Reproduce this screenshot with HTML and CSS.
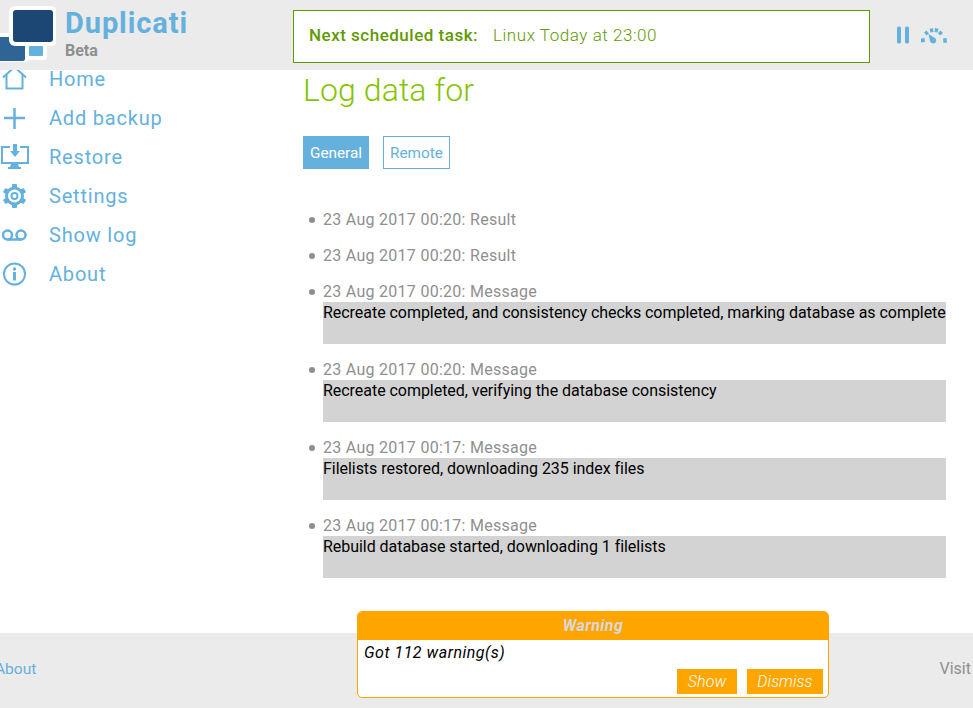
FILE: index.html
```html
<!DOCTYPE html>
<html lang="en">
<head>
<meta charset="utf-8">
<title>Duplicati</title>
<link rel="stylesheet" href="styles.css">
</head>
<body>
<div class="page">
  <header class="header">
    <div class="brand">
      <svg class="logo" width="56" height="64" viewBox="0 0 56 64">
        <rect x="-18" y="33" width="46" height="29" rx="3" fill="#fff"/>
        <rect x="-14" y="37" width="39" height="24" rx="2" fill="#2f6496"/>
        <rect x="26" y="44" width="21" height="16" rx="3" fill="#fff"/>
        <rect x="29" y="46" width="14" height="10" rx="1" fill="#64b1de"/>
        <rect x="9" y="6" width="48" height="40" rx="6" fill="#fff"/>
        <rect x="13" y="10" width="40" height="32" rx="3" fill="#1c4673"/>
      </svg>
      <div class="brand-text">
        <div class="brand-name">Duplicati</div>
        <div class="brand-beta">Beta</div>
      </div>
    </div>
    <div class="status">
      <span class="status-label">Next scheduled task:</span>
      <span class="status-value">Linux Today at 23:00</span>
    </div>
    <div class="controls">
      <svg width="14" height="18" viewBox="0 0 14 18"><rect x="1" y="0.500" width="4" height="17" rx="1.500" fill="#64b1de"/><rect x="9" y="0.500" width="4" height="17" rx="1.500" fill="#64b1de"/></svg>
      <svg class="gauge" width="26" height="17" viewBox="0 0 26 17" fill="#64b1de">
        <path d="M0 10.500l3.500-.5.500 4-4 .5z"/>
        <path d="M3 4.500l2.500-2 2.500 3-2.500 2z"/>
        <path d="M8.500 1l3.500-1 .5 4-3 .5z"/>
        <path d="M14 0l3.500.8-1 3.700-3-.5z"/>
        <path d="M19.500 2.500l2.500 2.500-2.800 2.500-2.300-2.300z"/>
        <path d="M22 10.500l3.500-.5.500 4.500-3.500.5z"/>
        <path d="M7.500 6l7 4.500c1.500 1.500.5 5-2 5-2 0-3-1-3.500-2.500z"/>
      </svg>
    </div>
  </header>
  <div class="body">
    <nav class="nav">
      <a class="nav-item"><svg class="nav-icon" width="30" height="26" viewBox="0 0 30 26" fill="none" stroke="#64b1de" stroke-width="2"><path d="M3 11.500L14.500 1 26 11.500"/><path d="M6.500 9v13.500h16V9"/></svg><span>Home</span></a>
      <a class="nav-item"><svg class="nav-icon" width="30" height="26" viewBox="0 0 30 26" fill="none" stroke="#64b1de" stroke-width="2.500"><path d="M4 13h21M14.500 3v21"/></svg><span>Add backup</span></a>
      <a class="nav-item"><svg class="nav-icon" width="30" height="26" viewBox="0 0 30 26"><path fill="#64b1de" d="M1 2h9v2H3v14h24V4h-7V2h9v18H18l1 3h2v2H8v-2h2l1-3H1z"/><path fill="#64b1de" d="M13 0h4v7h3l-5 6-5-6h3z"/></svg><span>Restore</span></a>
      <a class="nav-item"><svg class="nav-icon" width="30" height="26" viewBox="0 0 30 26"><g fill="#64b1de"><circle cx="14.500" cy="13" r="9.500"/><rect x="12" y="1" width="5" height="24" rx="1"/><rect x="12" y="1" width="5" height="24" rx="1" transform="rotate(60 14.500 13)"/><rect x="12" y="1" width="5" height="24" rx="1" transform="rotate(120 14.500 13)"/></g><circle cx="14.500" cy="13" r="6.500" fill="#fff"/><circle cx="14.500" cy="13" r="3" fill="none" stroke="#64b1de" stroke-width="2"/></svg><span>Settings</span></a>
      <a class="nav-item"><svg class="nav-icon" width="30" height="26" viewBox="0 0 30 26" fill="none" stroke="#64b1de" stroke-width="2.500"><circle cx="7.500" cy="13" r="4.500"/><circle cx="21" cy="13" r="4.500"/><path d="M7.500 17.500H21"/></svg><span>Show log</span></a>
      <a class="nav-item"><svg class="nav-icon" width="30" height="26" viewBox="0 0 30 26"><circle cx="14.500" cy="13" r="10.500" fill="none" stroke="#64b1de" stroke-width="2"/><circle cx="14.500" cy="8" r="1.700" fill="#64b1de"/><rect x="13" y="11" width="3" height="8.500" fill="#64b1de"/></svg><span>About</span></a>
    </nav>
    <main class="main">
      <h1 class="title">Log data for</h1>
      <div class="tabs">
        <a class="tab tab-active">General</a>
        <a class="tab">Remote</a>
      </div>
      <ul class="log">
        <li class="log-item">23 Aug 2017 00:20: Result</li>
        <li class="log-item">23 Aug 2017 00:20: Result</li>
        <li class="log-item">23 Aug 2017 00:20: Message<div class="log-msg">Recreate completed, and consistency checks completed, marking database as complete</div></li>
        <li class="log-item">23 Aug 2017 00:20: Message<div class="log-msg">Recreate completed, verifying the database consistency</div></li>
        <li class="log-item">23 Aug 2017 00:17: Message<div class="log-msg">Filelists restored, downloading 235 index files</div></li>
        <li class="log-item">23 Aug 2017 00:17: Message<div class="log-msg">Rebuild database started, downloading 1 filelists</div></li>
      </ul>
    </main>
  </div>
  <footer class="footer">
    <a class="foot-about">About</a>
    <span class="foot-visit">Visit</span>
  </footer>
  <div class="dialog">
    <div class="dialog-head">Warning</div>
    <div class="dialog-body">
      <div class="dialog-msg">Got 112 warning(s)</div>
      <div class="dialog-actions">
        <a class="dialog-btn">Show</a>
        <a class="dialog-btn">Dismiss</a>
      </div>
    </div>
  </div>
</div>
</body>
</html>
```

FILE: styles.css
```css
html, body { margin: 0; padding: 0; }
body { font-family: Roboto, "Liberation Sans", sans-serif; font-size: 16px; background: #fff; overflow: hidden; }
.page { position: relative; width: 973px; height: 708px; overflow: hidden; display: flex; flex-direction: column; }
.header { position: relative; z-index: 1; height: 70px; flex: none; background: #ebebeb; display: flex; }
.brand { width: 293px; display: flex; flex: none; }
.logo { flex: none; margin-right: 9px; }
.brand-text { padding-top: 6px; }
.brand-name { font-size: 29px; line-height: 34px; font-weight: 700; color: #64b1de; letter-spacing: 0.9px; }
.brand-beta { font-size: 16px; line-height: 20px; margin-top: 1px; font-weight: 700; color: #8f8f8f; }
.status { width: 560px; height: 47px; margin-top: 10px; padding: 0 0 4px 15px; border: 1px solid #5f9b00; background: #fff; display: flex; align-items: center; gap: 15px; color: #5f9b00; font-size: 17px; letter-spacing: 0.5px; }
.status-label { font-weight: 500; }
.status-value { font-weight: 300; letter-spacing: 0.55px; }
.controls { display: flex; align-items: center; gap: 11px; padding: 0 0 0 26px; height: 70px; }
.gauge { margin-top: 2px; }
.body { flex: 1; display: flex; min-height: 0; }
.nav { width: 303px; flex: none; display: flex; flex-direction: column; margin-top: -11px; }
.nav-item { height: 39px; flex: none; display: flex; align-items: center; color: #64b1de; font-size: 20px; font-weight: 400; letter-spacing: 0.8px; }
.nav-icon { flex: none; margin-right: 19px; }
.main { flex: 1; min-width: 0; }
.title { margin: -1px 0 0; font-size: 32px; line-height: 42px; font-weight: 300; color: #84c400; letter-spacing: 0.1px; }
.tabs { display: flex; gap: 14px; margin-top: 25px; }
.tab { height: 33px; box-sizing: border-box; border: 1px solid #64b1de; color: #64b1de; padding: 0 6px; display: flex; align-items: center; font-size: 15.3px; }
.tab-active { background: #64b1de; color: #fff; }
.log { list-style: none; margin: 40px 0 0; padding: 0 27px 0 20px; }
.log-item { position: relative; line-height: 22px; padding-bottom: 14px; color: #8f8f8f; font-size: 16px; letter-spacing: 0.28px; }
.log-item::before { content: ""; position: absolute; left: -14px; top: 8px; width: 6px; height: 6px; border-radius: 50%; background: #8f8f8f; }
.log-msg { background: #d3d3d3; color: #000; height: 42px; line-height: 21px; margin-top: -1px; margin-bottom: 1px; white-space: nowrap; letter-spacing: -0.04px; }
.footer { height: 75px; flex: none; padding-bottom: 4px; box-sizing: border-box; background: #ebebeb; display: flex; justify-content: space-between; align-items: center; font-size: 16px; }
.foot-about { color: #64b1de; margin-left: -5px; font-size: 15.5px; }
.foot-visit { color: #8f8f8f; margin-right: 2px; }
.dialog { position: absolute; left: 357px; top: 611px; width: 472px; height: 87px; box-sizing: border-box; border: 1px solid #ffa500; border-radius: 5px; overflow: hidden; background: #fff; display: flex; flex-direction: column; }
.dialog-head { height: 28px; flex: none; background: #ffa500; color: #d8d8d8; font-weight: 700; font-style: italic; text-align: center; line-height: 28px; font-size: 16px; letter-spacing: 0.4px; }
.dialog-body { flex: 1; padding: 2px 5px 3px 6px; display: flex; flex-direction: column; justify-content: space-between; }
.dialog-msg { font-style: italic; color: #000; line-height: 22px; letter-spacing: 0.5px; }
.dialog-actions { display: flex; justify-content: flex-end; gap: 10px; }
.dialog-btn { height: 25px; background: #ffa500; color: #fff; font-style: italic; font-weight: 300; line-height: 25px; padding: 0 10.5px; letter-spacing: 0.1px; }
```
